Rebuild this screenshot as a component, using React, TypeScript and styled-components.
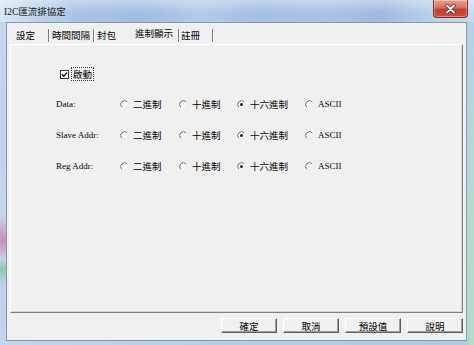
import React from "react";
import styled, { createGlobalStyle } from "styled-components";

const Global = createGlobalStyle`
  html, body { margin: 0; padding: 0; width: 474px; height: 345px; overflow: hidden; background: #b9d1ea; }
  #root { width: 474px; height: 345px; }
`;

const CJK = `"Noto Sans CJK TC", "Noto Sans CJK SC", sans-serif`;
const SERIF = `"Liberation Serif", "Noto Sans CJK TC", serif`;

const Window = styled.div`
  width: 474px;
  height: 345px;
  box-sizing: border-box;
  display: flex;
  flex-direction: column;
  background:
    linear-gradient(180deg, #c6d9ee 0%, #bcd3ea 40%, #c9d6ea 62%, #c98fb4 70%, #c2d3e8 75%, #8fc9a8 78%, #bcd3ea 82%, #c0d6ec 100%) no-repeat 0 0 / 6px 100%,
    linear-gradient(180deg, #b7cfe8 0%, #b4d9d0 60%, #b0dcc8 100%) no-repeat 100% 0 / 7px 100%,
    linear-gradient(90deg, #c3d7ec 0%, #b4cde8 50%, #aecbe7 100%);
`;

const TitleBar = styled.div`
  height: 22px;
  flex: none;
  display: flex;
  align-items: flex-start;
  background:
    linear-gradient(180deg, rgba(255,255,255,0.35) 0%, rgba(255,255,255,0) 60%),
    linear-gradient(90deg, #d9e6f4 0%, #c4d8ee 6%, #a9c4e3 16%, #9fbde0 30%, #b3cbe7 42%, #a2bfe1 55%, #aac5e4 68%, #9db9de 80%, #b6cfe9 90%, #c7dbef 100%);
`;

const Title = styled.div`
  font-family: ${SERIF};
  font-size: 9.5px;
  line-height: 14px;
  margin: 5px 0 0 4px;
  color: #1a1a1a;
  white-space: nowrap;
`;

const CloseButton = styled.div`
  margin-left: auto;
  margin-right: 6px;
  width: 35px;
  height: 18px;
  box-sizing: border-box;
  border: 1px solid #7d2a22;
  border-top: none;
  border-radius: 0 0 4px 4px;
  background: linear-gradient(180deg, #e6a393 0%, #d5705f 45%, #c0402f 55%, #c9503d 100%);
  display: flex;
  align-items: center;
  justify-content: center;
  box-shadow: inset 0 0 0 1px rgba(255,255,255,0.35);
`;

const Body = styled.div`
  flex: 1;
  margin: 0 7px 4px 6px;
  background: #f0f0f0;
  border: 1px solid #8799ad;
  display: flex;
  flex-direction: column;
  min-height: 0;
`;

const TabStrip = styled.div`
  height: 21px;
  flex: none;
  display: flex;
  align-items: flex-start;
  padding: 5px 0 0 9px;
  box-sizing: border-box;
`;

const Tab = styled.div<{ $l: number; $r: number; $active?: boolean }>`
  font-family: ${CJK};
  font-size: 9.5px;
  line-height: 14px;
  color: #000;
  white-space: nowrap;
  padding: 0 ${(p) => p.$r}px 0 ${(p) => p.$l}px;
  transform: translateY(${(p) => (p.$active ? -2 : 0)}px);
`;

const TabSep = styled.div`
  width: 1px;
  height: 13px;
  margin-top: 1px;
  background: #7a7a7a;
  border-right: 1px solid #ffffff;
`;

const Panel = styled.div`
  height: 269px;
  flex: none;
  margin: 0 3px;
  box-sizing: border-box;
  border: 1px solid;
  border-color: #ffffff #808080 #808080 #ffffff;
  box-shadow: inset -1px -1px 0 #d6d6d6;
  display: flex;
  flex-direction: column;
`;

const CheckRow = styled.div`
  display: flex;
  align-items: center;
  height: 14px;
  margin: 22px 0 0 49px;
`;

const CheckLabel = styled.span`
  font-family: ${CJK};
  font-size: 9.5px;
  line-height: 12px;
  color: #000;
  border: 1px dotted #333;
  padding: 0 1px;
  margin-left: 2px;
`;

const OptionGrid = styled.div`
  display: grid;
  grid-template-columns: 64px 59px 58px 68px max-content;
  grid-auto-rows: 14px;
  row-gap: 17px;
  margin: 16px 0 0 45px;
`;

const RowLabel = styled.div`
  font-family: ${SERIF};
  font-size: 9px;
  line-height: 14px;
  color: #000;
  white-space: nowrap;
`;

const Option = styled.div`
  display: flex;
  align-items: center;
  gap: 4px;
  height: 14px;
`;

const OptionText = styled.span<{ $latin?: boolean }>`
  font-family: ${(p) => (p.$latin ? SERIF : CJK)};
  font-size: ${(p) => (p.$latin ? 9 : 9.5)}px;
  line-height: 14px;
  color: #000;
  white-space: nowrap;
`;

const ButtonRow = styled.div`
  flex: 1;
  display: flex;
  justify-content: flex-end;
  align-items: flex-start;
  gap: 6px;
  padding: 5px 3px 0 0;
`;

const DlgButton = styled.div`
  width: 56px;
  height: 15px;
  box-sizing: border-box;
  border: 1px solid;
  border-color: #ffffff #5e5e5e #5e5e5e #ffffff;
  box-shadow: inset -1px -1px 0 #a0a0a0;
  background: #f0f0f0;
  display: flex;
  align-items: center;
  justify-content: center;
  font-family: ${CJK};
  font-size: 9.5px;
  line-height: 12px;
  color: #000;
`;

const Radio: React.FC<{ checked?: boolean }> = ({ checked }) => (
  <svg width="9" height="9" viewBox="0 0 9 9" style={{ flex: "none" }}>
    <circle cx="4.5" cy="4.5" r="3.8" fill="#f7f7f7" />
    <path d="M7.2 1.8 A3.8 3.8 0 0 0 1.8 7.2" fill="none" stroke="#6e6e6e" strokeWidth="1" />
    <path d="M1.8 7.2 A3.8 3.8 0 0 0 7.2 1.8" fill="none" stroke="#e8e8e8" strokeWidth="1" />
    {checked && <circle cx="4.5" cy="4.5" r="1.5" fill="#222" />}
  </svg>
);

const CheckBox: React.FC = () => (
  <svg width="9" height="9" viewBox="0 0 9 9" style={{ flex: "none" }}>
    <rect x="0.5" y="0.5" width="8" height="8" fill="#fff" stroke="#333" />
    <path d="M2 4.3 L3.8 6.2 L7 2.6" fill="none" stroke="#111" strokeWidth="1.4" />
  </svg>
);

const rows = [
  { label: "Data:" },
  { label: "Slave Addr:" },
  { label: "Reg Addr:" },
];

const options = [
  { text: "二進制" },
  { text: "十進制" },
  { text: "十六進制", checked: true },
  { text: "ASCII", latin: true },
];

export default function App() {
  return (
    <>
      <Global />
      <Window>
        <TitleBar>
          <Title>I2C匯流排協定</Title>
          <CloseButton>
            <svg width="11" height="10" viewBox="0 0 11 10">
              <path d="M2 1.5 L9 8.5 M9 1.5 L2 8.5" stroke="#5a1f18" strokeWidth="3.2" strokeLinecap="round" />
              <path d="M2 1.5 L9 8.5 M9 1.5 L2 8.5" stroke="#ffffff" strokeWidth="1.8" strokeLinecap="round" />
            </svg>
          </CloseButton>
        </TitleBar>
        <Body>
          <TabStrip>
            <Tab $l={0} $r={13}>設定</Tab>
            <TabSep />
            <Tab $l={2} $r={3}>時間間隔</Tab>
            <TabSep />
            <Tab $l={2} $r={19}>封包</Tab>
            <Tab $l={0} $r={5} $active>進制顯示</Tab>
            <TabSep />
            <Tab $l={1} $r={12}>註冊</Tab>
            <TabSep />
          </TabStrip>
          <Panel>
            <CheckRow>
              <CheckBox />
              <CheckLabel>啟動</CheckLabel>
            </CheckRow>
            <OptionGrid>
              {rows.map((r) => (
                <React.Fragment key={r.label}>
                  <RowLabel>{r.label}</RowLabel>
                  {options.map((o) => (
                    <Option key={o.text}>
                      <Radio checked={o.checked} />
                      <OptionText $latin={o.latin}>{o.text}</OptionText>
                    </Option>
                  ))}
                </React.Fragment>
              ))}
            </OptionGrid>
          </Panel>
          <ButtonRow>
            <DlgButton>確定</DlgButton>
            <DlgButton>取消</DlgButton>
            <DlgButton>預設值</DlgButton>
            <DlgButton>說明</DlgButton>
          </ButtonRow>
        </Body>
      </Window>
    </>
  );
}
